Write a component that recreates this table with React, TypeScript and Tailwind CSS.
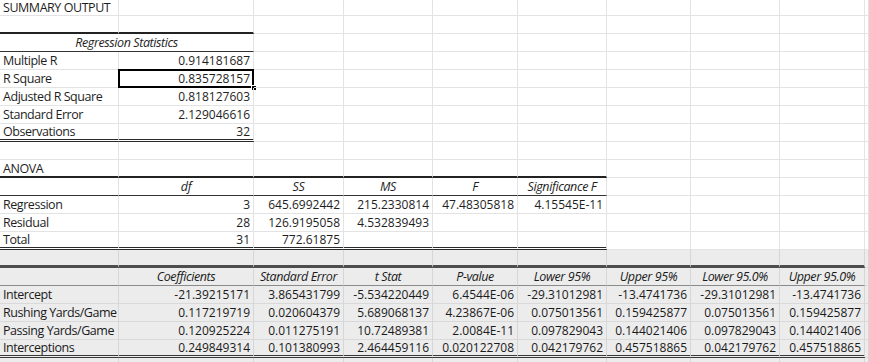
import React from "react";

type B = "g" | "thick" | "thin" | "dbl";
type Cell = { t?: string; a?: "l" | "r" | "c"; i?: boolean; b?: B; span?: number; sel?: boolean };

const ROW_GRID = "grid grid-cols-[119px_135px_90px_89px_85px_89px_84px_89px_85px_4px]";

const bottomWhite: Record<B, string> = {
  g: "border-b border-b-[#e3e3e3]",
  thick: "border-b-2 border-b-[#222222]",
  thin: "border-b border-b-[#333333]",
  dbl: "border-b-[3px] border-double border-b-[#2a2a2a]",
};
const bottomGray: Record<B, string> = {
  g: "border-b border-b-[#d9d9d9]",
  thick: "border-b-[3px] border-b-[#4d4d4d]",
  thin: "border-b border-b-[#8a8a8a]",
  dbl: "border-b-[3px] border-double border-b-[#3a3a3a]",
};

const spanCls: Record<number, string> = { 1: "", 2: "col-span-2" };

function fill(cells: Cell[], extra: Cell[] = []): Cell[] {
  const out = [...cells];
  let count = out.reduce((s, c) => s + (c.span ?? 1), 0);
  while (count < 10) {
    out.push({ ...(extra[0] ?? {}) });
    count++;
  }
  return out;
}

function tbl(values: (string | Cell)[], n: number, b: B, rest: B = "g"): Cell[] {
  const cells: Cell[] = [];
  for (let k = 0; k < n; k++) {
    const v = values[k];
    if (typeof v === "object") cells.push({ ...v, b });
    else cells.push({ t: v ?? "", a: k === 0 ? "l" : "r", b });
  }
  return fill(cells, [{ b: rest }]);
}

const hdr = (t: string): Cell => ({ t, a: "c", i: true });

const rows: { h: string; gray?: boolean; cells: Cell[] }[] = [
  { h: "h-[16px]", cells: fill([{ t: "SUMMARY OUTPUT", a: "l" }]) },
  { h: "h-[18px]", cells: fill([{ b: "thick" }, { b: "thick" }]) },
  { h: "h-[18px]", cells: fill([{ t: "Regression Statistics", a: "c", i: true, span: 2, b: "thin" }]) },
  { h: "h-[18px]", cells: tbl(["Multiple R", "0.914181687"], 2, "g") },
  { h: "h-[18px]", cells: fill([{ t: "R Square", a: "l" }, { t: "0.835728157", a: "r", sel: true }]) },
  { h: "h-[18px]", cells: tbl(["Adjusted R Square", "0.818127603"], 2, "g") },
  { h: "h-[18px]", cells: tbl(["Standard Error", "2.129046616"], 2, "g") },
  { h: "h-[18px]", cells: tbl(["Observations", "32"], 2, "dbl") },
  { h: "h-[18px]", cells: fill([]) },
  { h: "h-[18px]", cells: tbl(["ANOVA"], 6, "thick") },
  { h: "h-[18px]", cells: tbl(["", hdr("df"), hdr("SS"), hdr("MS"), hdr("F"), hdr("Significance F")], 6, "thin") },
  { h: "h-[18px]", cells: tbl(["Regression", "3", "645.6992442", "215.2330814", "47.48305818", "4.15545E-11"], 6, "g") },
  { h: "h-[18px]", cells: tbl(["Residual", "28", "126.9195058", "4.532839493"], 6, "g") },
  { h: "h-[18px]", cells: tbl(["Total", "31", "772.61875"], 6, "dbl") },
  { h: "h-[18px]", gray: true, cells: tbl([], 9, "thick") },
  {
    h: "h-[18px]",
    gray: true,
    cells: tbl(
      [
        "",
        hdr("Coefficients"),
        hdr("Standard Error"),
        hdr("t Stat"),
        hdr("P-value"),
        hdr("Lower 95%"),
        hdr("Upper 95%"),
        hdr("Lower 95.0%"),
        hdr("Upper 95.0%"),
      ],
      9,
      "thin"
    ),
  },
  {
    h: "h-[18px]",
    gray: true,
    cells: tbl(
      ["Intercept", "-21.39215171", "3.865431799", "-5.534220449", "6.4544E-06", "-29.31012981", "-13.4741736", "-29.31012981", "-13.4741736"],
      9,
      "g"
    ),
  },
  {
    h: "h-[18px]",
    gray: true,
    cells: tbl(
      ["Rushing Yards/Game", "0.117219719", "0.020604379", "5.689068137", "4.23867E-06", "0.075013561", "0.159425877", "0.075013561", "0.159425877"],
      9,
      "g"
    ),
  },
  {
    h: "h-[18px]",
    gray: true,
    cells: tbl(
      ["Passing Yards/Game", "0.120925224", "0.011275191", "10.72489381", "2.0084E-11", "0.097829043", "0.144021406", "0.097829043", "0.144021406"],
      9,
      "g"
    ),
  },
  {
    h: "h-[18px]",
    gray: true,
    cells: tbl(
      ["Interceptions", "0.249849314", "0.101380993", "2.464459116", "0.020122708", "0.042179762", "0.457518865", "0.042179762", "0.457518865"],
      9,
      "dbl"
    ),
  },
  { h: "h-[18px]", gray: true, cells: fill([]) },
];

const alignCls = {
  l: "justify-start pl-[3px] tracking-[-0.45px] text-[12.5px]",
  r: "justify-end pr-[3px] tracking-[0px] text-[12px]",
  c: "justify-center tracking-[-0.4px] text-[12.5px]",
};

export default function App() {
  return (
    <div
      className="w-[869px] h-[362px] overflow-hidden bg-white text-[#1e1e1e] leading-[15px] text-[12.5px]"
      style={{ fontFamily: "'Open Sans', 'Noto Sans', 'Liberation Sans', sans-serif" }}
    >
      {rows.map((row, ri) => (
        <div
          key={ri}
          className={`${ROW_GRID} ${row.h} ${row.gray ? "bg-[#ececec] text-[#1a1a1a]" : "bg-white"}`}
        >
          {row.cells.map((c, ci) => {
            const b = c.b ?? "g";
            const bcls = row.gray ? bottomGray[b] : bottomWhite[b];
            const rcls = row.gray ? "border-r border-r-[#d6d6d6]" : "border-r border-r-[#e3e3e3]";
            return (
              <div
                key={ci}
                className={`relative flex items-center whitespace-nowrap ${spanCls[c.span ?? 1]} ${bcls} ${rcls} ${alignCls[c.a ?? "l"]} ${c.i ? "italic" : ""}`}
              >
                {c.t}
                {c.sel && (
                  <>
                    <div className="absolute -left-[1px] -top-[1px] -right-[1px] -bottom-[1px] border-2 border-black pointer-events-none" />
                    <div className="absolute -right-[4px] -bottom-[4px] w-[6px] h-[6px] bg-black border border-white" />
                  </>
                )}
              </div>
            );
          })}
        </div>
      ))}
    </div>
  );
}
